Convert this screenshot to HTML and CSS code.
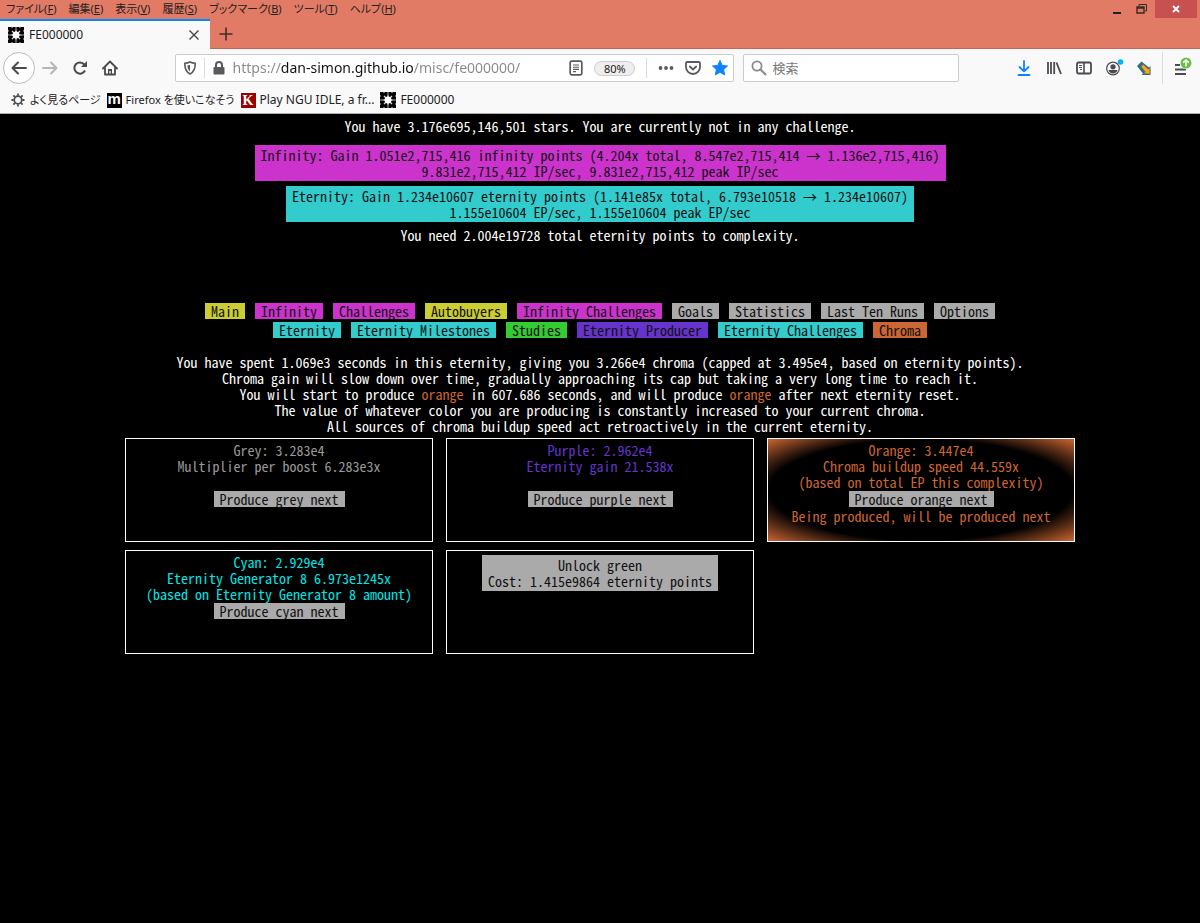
FILE: index.html
```html
<!DOCTYPE html>
<html lang="ja">
<head>
    <meta charset="UTF-8">
    <meta name="viewport" content="width=device-width, initial-scale=1.0">
    <title>FE000000</title>
    <link rel="stylesheet" href="styles.css">
</head>
<body>
    <svg class="defs" aria-hidden="true">
        <symbol id="star-icon" viewBox="0 0 16 16">
            <rect width="16" height="16" fill="#050505"/>
            <path d="M8 0v16M0 8h16" stroke="#aaa" stroke-width="1"/>
            <path d="M4 4l8 8M12 4l-8 8" stroke="#ddd" stroke-width="1.2"/>
            <circle cx="8" cy="8" r="3.4" fill="#fff"/>
            <path d="M8 2.500l1.500 5.500L8 13.500 6.500 8zM2.500 8L8 6.500 13.500 8 8 9.500z" fill="#fff"/>
            <path d="M.5 3v2M.5 11v2M15.5 3v2M15.5 11v2M3 .5h2M11 .5h2M3 15.5h2M11 15.5h2" stroke="#666"/>
        </symbol>
    </svg>

    <header class="browser">
        <div class="title-bar">
            <nav class="menu-bar">
                <a href="#file">ファイル(<u>F</u>)</a>
                <a href="#edit">編集(<u>E</u>)</a>
                <a href="#view">表示(<u>V</u>)</a>
                <a href="#history">履歴(<u>S</u>)</a>
                <a href="#bookmarks">ブックマーク(<u>B</u>)</a>
                <a href="#tools">ツール(<u>T</u>)</a>
                <a href="#help">ヘルプ(<u>H</u>)</a>
            </nav>
            <div class="window-buttons">
                <button aria-label="Minimize"><svg width="10" height="12" viewBox="0 0 10 12"><path d="M1 9h8v2H1z" fill="#222"/></svg></button>
                <button aria-label="Restore"><svg width="12" height="12" viewBox="0 0 12 12" fill="none" stroke="#3a2a26"><path d="M1 4h7v6H1zM1 5h7" stroke-width="1.4"/><path d="M3 3V1.5h7.500V8H9"/></svg></button>
                <button class="close" aria-label="Close"><svg width="10" height="10" viewBox="0 0 10 10"><path d="M2 2l6 6M8 2L2 8" stroke="#fff" stroke-width="1.8"/></svg></button>
            </div>
        </div>

        <div class="tab-strip">
            <div class="browser-tab">
                <svg width="16" height="16"><use href="#star-icon"/></svg>
                <span>FE000000</span>
                <button aria-label="Close tab"><svg width="12" height="12" viewBox="0 0 12 12"><path d="M1.500 1.500l9 9M10.500 1.500l-9 9" stroke="#444" stroke-width="1.400"/></svg></button>
            </div>
            <button class="new-tab" aria-label="New tab"><svg width="14" height="14" viewBox="0 0 14 14"><path d="M7 .5v13M.5 7h13" stroke="#4a2a22" stroke-width="1.600"/></svg></button>
        </div>

        <div class="toolbar">
            <button class="back" aria-label="Back"><svg width="16" height="16" viewBox="0 0 16 16" fill="none" stroke="#4a4a4f" stroke-width="2" stroke-linecap="round" stroke-linejoin="round"><path d="M7 2.500L1.500 8 7 13.500M2 8h13"/></svg></button>
            <button class="tool" aria-label="Forward"><svg width="16" height="16" viewBox="0 0 16 16" fill="none" stroke="#b5b5b6" stroke-width="2" stroke-linecap="round" stroke-linejoin="round"><path d="M9 2.500L14.500 8 9 13.500M14 8H1"/></svg></button>
            <button class="tool" aria-label="Reload"><svg width="16" height="16" viewBox="0 0 16 16"><path d="M13 10.500A5.600 5.600 0 1 1 12.300 4.500" fill="none" stroke="#4a4a4f" stroke-width="2"/><path d="M15 1v6H9z" fill="#4a4a4f"/></svg></button>
            <button class="tool" aria-label="Home"><svg width="16" height="16" viewBox="0 0 16 16"><path d="M1 8.500L8 1.500l7 7M3 8v6.500h10V8" fill="none" stroke="#4a4a4f" stroke-width="1.800" stroke-linejoin="round" stroke-linecap="round"/><path d="M6 14V9h4v5H8.700v-3H7.300v3z" fill="#4a4a4f"/></svg></button>
            <span class="spacer"></span>
            <div class="url-bar">
                <svg width="14" height="14" viewBox="0 0 14 14"><path d="M7 1C5 2 3.500 2.200 1.800 2.300 1.600 7.500 3 11 7 13c4-2 5.400-5.500 5.200-10.700C10.500 2.200 9 2 7 1z" fill="none" stroke="#5a5a5e" stroke-width="1.600"/><path d="M7 3.800c-1 .5-1.800.7-2.600.8C4.500 7.500 5.300 9.300 7 10.400z" fill="#5a5a5e"/></svg>
                <span class="divider"></span>
                <svg width="14" height="16" viewBox="0 0 14 16"><rect x="1.500" y="7" width="11" height="7.500" rx="1" fill="#5a5a5e"/><path d="M4 8V5a3 3 0 0 1 6 0v3" fill="none" stroke="#5a5a5e" stroke-width="2"/></svg>
                <input class="url" type="text" aria-label="Address" value="https://dan-simon.github.io/misc/fe000000/">
                <div class="url-actions">
                    <button aria-label="Reader view"><svg width="14" height="16" viewBox="0 0 14 16"><rect x="1.200" y="1.200" width="11.600" height="13.600" rx="1.500" fill="none" stroke="#5a5a5e" stroke-width="1.700"/><path d="M4 5h6M4 7.200h6M4 9.400h6M4 11.600h3" stroke="#5a5a5e" stroke-width="1.100"/></svg></button>
                    <button class="zoom-level">80%</button>
                    <span class="divider"></span>
                    <button aria-label="Page actions"><svg width="16" height="16" viewBox="0 0 16 16" fill="#5a5a5e"><circle cx="2.500" cy="8" r="1.900"/><circle cx="8" cy="8" r="1.900"/><circle cx="13.500" cy="8" r="1.900"/></svg></button>
                    <button aria-label="Save to Pocket"><svg width="16" height="16" viewBox="0 0 16 16" fill="none" stroke="#5a5a5e" stroke-width="1.800" stroke-linecap="round" stroke-linejoin="round"><path d="M2.200 2h11.600q1.200 0 1.200 1.200V7a7 7 0 0 1-14 0V3.200Q1 2 2.200 2z"/><path d="M4.800 6.500L8 9.500l3.200-3"/></svg></button>
                    <button aria-label="Bookmark"><svg width="16" height="16" viewBox="0 0 16 16"><path d="M8 .5l2.200 4.900 5.300.6-3.900 3.600 1.100 5.300L8 12.300l-4.700 2.600 1.100-5.300L.5 6l5.300-.6z" fill="#0a84ff" stroke="#0a84ff" stroke-linejoin="round"/></svg></button>
                </div>
            </div>
            <label class="search-bar">
                <svg width="16" height="16" viewBox="0 0 16 16"><circle cx="6" cy="6" r="4.600" fill="none" stroke="#8a8a8d" stroke-width="1.800"/><path d="M9.500 9.500l5 5" stroke="#8a8a8d" stroke-width="2" stroke-linecap="round"/></svg>
                <input type="text" placeholder="検索" aria-label="検索">
            </label>
            <span class="spacer"></span>
            <button class="tool" aria-label="Downloads"><svg width="16" height="16" viewBox="0 0 16 16" fill="none" stroke="#0a84ff" stroke-width="1.800" stroke-linecap="round" stroke-linejoin="round"><path d="M8 1v10M3.500 7L8 11.300 12.500 7M2.500 15h11"/></svg></button>
            <button class="tool" aria-label="Library"><svg width="16" height="16" viewBox="0 0 16 16" fill="none" stroke="#4a4a4f" stroke-width="1.800"><path d="M2 2v12M5 2v12M8.200 2v12M10.500 2.500L15 14"/></svg></button>
            <button class="tool" aria-label="Sidebars"><svg width="16" height="16" viewBox="0 0 16 16" fill="none" stroke="#4a4a4f"><rect x="1" y="2.500" width="14" height="11" rx="1.500" stroke-width="1.800"/><path d="M8 3v10" stroke-width="1.600"/><path d="M3 5.500h3M3 7.500h3M4 9.500h2"/></svg></button>
            <button class="tool" aria-label="Account"><svg width="20" height="18" viewBox="0 0 20 18"><circle cx="9" cy="9.500" r="6.300" fill="none" stroke="#4a4a4f" stroke-width="1.200"/><circle cx="9" cy="7.800" r="2.600" fill="#4a4a4f"/><path d="M4.500 11h9c-.5 2.300-2.300 3.500-4.500 3.500s-4-1.200-4.500-3.500z" fill="#4a4a4f"/><circle cx="16.500" cy="3" r="2.800" fill="#00b3f4"/></svg></button>
            <button class="tool" aria-label="Download helper"><svg width="16" height="16" viewBox="0 0 16 16"><path d="M1 6L5.500 1.500 13 7.500l1.500-1.500v9H5.500l1.500-1.500z" fill="#2f6d85"/><path d="M5 6.500l2.200-2 5 4.700 1.500-1.400.3 6.200-6.300-.6 1.600-1.500z" fill="#f5a623" stroke="#8a6a30" stroke-width=".6"/></svg></button>
            <span class="divider tall"></span>
            <button class="tool app-menu" aria-label="Open menu"><svg width="20" height="22" viewBox="0 0 20 22"><path d="M3 8h5M3 12.500h11M3 17h11" stroke="#4a4a4f" stroke-width="1.800"/><circle cx="14" cy="6" r="6" fill="#fff"/><circle cx="14" cy="6" r="5.500" fill="#6cbd45"/><path d="M14 9.500V3M11.200 5.600L14 3l2.800 2.600" fill="none" stroke="#fff" stroke-width="1.500"/></svg></button>
        </div>

        <nav class="bookmarks">
            <a href="#frequent" class="kana"><svg width="16" height="16" viewBox="0 0 16 16" fill="none" stroke="#4a4a4f"><circle cx="8" cy="8" r="3.800" stroke-width="1.800"/><path d="M8 1.500v2M8 12.500v2M1.500 8h2M12.500 8h2M3.400 3.400l1.400 1.400M11.200 11.200l1.400 1.400M12.600 3.400l-1.400 1.400M4.800 11.200l-1.400 1.400" stroke-width="1.800"/></svg>よく見るページ</a>
            <a href="#firefox" class="kana"><span class="badge moz">m</span>Firefox を使いこなそう</a>
            <a href="#ngu"><span class="badge kong">K</span>Play NGU IDLE, a fr...</a>
            <a href="#fe"><svg width="16" height="16"><use href="#star-icon"/></svg>FE000000</a>
        </nav>
    </header>

    <main lang="en">
        <section class="resets">
            <p>You have 3.176e695,146,501 stars. You are currently not in any challenge.</p>
            <button class="magenta">Infinity: Gain 1.051e2,715,416 infinity points (4.204x total, 8.547e2,715,414 → 1.136e2,715,416)<br>9.831e2,715,412 IP/sec, 9.831e2,715,412 peak IP/sec</button>
            <button class="cyan">Eternity: Gain 1.234e10607 eternity points (1.141e85x total, 6.793e10518 → 1.234e10607)<br>1.155e10604 EP/sec, 1.155e10604 peak EP/sec</button>
            <p>You need 2.004e19728 total eternity points to complexity.</p>
        </section>

        <nav class="game-tabs">
            <div>
                <button class="yellow">Main</button>
                <button class="magenta">Infinity</button>
                <button class="magenta">Challenges</button>
                <button class="yellow">Autobuyers</button>
                <button class="magenta">Infinity Challenges</button>
                <button>Goals</button>
                <button>Statistics</button>
                <button>Last Ten Runs</button>
                <button>Options</button>
            </div>
            <div>
                <button class="cyan">Eternity</button>
                <button class="cyan">Eternity Milestones</button>
                <button class="green">Studies</button>
                <button class="purple">Eternity Producer</button>
                <button class="cyan">Eternity Challenges</button>
                <button class="orange">Chroma</button>
            </div>
        </nav>

        <section class="chroma-info">
            <p>You have spent 1.069e3 seconds in this eternity, giving you 3.266e4 chroma (capped at 3.495e4, based on eternity points).</p>
            <p>Chroma gain will slow down over time, gradually approaching its cap but taking a very long time to reach it.</p>
            <p>You will start to produce <span class="orange-text">orange</span> in 607.686 seconds, and will produce <span class="orange-text">orange</span> after next eternity reset.</p>
            <p>The value of whatever color you are producing is constantly increased to your current chroma.</p>
            <p>All sources of chroma buildup speed act retroactively in the current eternity.</p>
        </section>

        <section class="colors">
            <div class="color-box grey-text">
                <p>Grey: 3.283e4</p>
                <p>Multiplier per boost 6.283e3x</p>
                <p>&nbsp;</p>
                <button>Produce grey next</button>
            </div>
            <div class="color-box purple-text">
                <p>Purple: 2.962e4</p>
                <p>Eternity gain 21.538x</p>
                <p>&nbsp;</p>
                <button>Produce purple next</button>
            </div>
            <div class="color-box orange-text producing">
                <p>Orange: 3.447e4</p>
                <p>Chroma buildup speed 44.559x</p>
                <p>(based on total EP this complexity)</p>
                <button>Produce orange next</button>
                <p>Being produced, will be produced next</p>
            </div>
            <div class="color-box cyan-text">
                <p>Cyan: 2.929e4</p>
                <p>Eternity Generator 8 6.973e1245x</p>
                <p>(based on Eternity Generator 8 amount)</p>
                <button>Produce cyan next</button>
            </div>
            <div class="color-box">
                <button class="unlock">Unlock green<br>Cost: 1.415e9864 eternity points</button>
            </div>
        </section>
    </main>
</body>
</html>
```
FILE: styles.css
```css
* {
    box-sizing: border-box;
}

body {
    margin: 0;
    background: #000;
    color: #fff;
}

p {
    margin: 0;
}

button {
    border: 0;
    padding: 0;
    background: none;
    font: inherit;
    color: inherit;
}

svg {
    display: block;
    flex: none;
}

.defs {
    position: absolute;
    width: 0;
    height: 0;
}

/* Browser window */
.browser {
    background: #f9f9fa;
    color: #222;
    font: 12px/16px "Noto Sans", "Noto Sans CJK JP", sans-serif;
    font-feature-settings: "palt";
    border-bottom: 1px solid #aaa;
}

.browser a {
    color: inherit;
    text-decoration: none;
    white-space: nowrap;
}

.title-bar {
    display: flex;
    justify-content: space-between;
    align-items: flex-start;
    height: 19px;
    background: #e27b65;
}

.menu-bar {
    display: flex;
    gap: 12px;
    padding: 1px 6px;
}

.browser .menu-bar a,
.browser .kana {
    font-size: 11px;
}

.window-buttons {
    display: flex;
    align-items: center;
    gap: 14px;
    padding-right: 3px;
}

.window-buttons .close {
    display: flex;
    align-items: center;
    justify-content: center;
    width: 42px;
    height: 18px;
    margin-left: -7px;
    background: #c75050;
}

.tab-strip {
    display: flex;
    height: 30px;
    background: #e27b65;
    border-bottom: 1px solid #c0675a;
}

.browser-tab {
    display: flex;
    align-items: center;
    gap: 5px;
    width: 210px;
    height: 30px;
    padding: 0 10px 0 8px;
    background: #f9f9fa;
    border-top: 2px solid #0a84ff;
}

.browser-tab button {
    margin-left: auto;
}

.new-tab {
    padding: 0 9px;
}

.toolbar {
    display: flex;
    align-items: center;
    height: 38px;
    padding: 0 3px;
}

.back {
    display: flex;
    align-items: center;
    justify-content: center;
    width: 32px;
    height: 32px;
    border: 1px solid #bbb;
    border-radius: 50%;
    background: #fff;
}

.tool {
    display: flex;
    align-items: center;
    justify-content: center;
    width: 30px;
    height: 30px;
}

.spacer {
    flex: 1;
}

.url-bar,
.search-bar {
    display: flex;
    align-items: center;
    height: 28px;
    background: #fff;
    border: 1px solid #ccc;
    border-radius: 2px;
}

.url-bar {
    flex: 11;
    gap: 7px;
    padding: 0 5px 0 7px;
}

.url-actions {
    display: flex;
    align-items: center;
    gap: 11px;
}

.search-bar {
    width: 216px;
    margin-left: 9px;
    padding: 0 7px;
    gap: 5px;
}

.browser input {
    flex: 1;
    min-width: 0;
    padding: 0;
    border: 0;
    outline: 0;
    background: none;
    font: 14px/20px "Noto Sans", "Noto Sans CJK JP", sans-serif;
}

.search-bar input {
    font-size: 13px;
}

.browser input::placeholder {
    color: #777;
}

/* The host name is darker than the rest of the address */
.browser .url {
    background: linear-gradient(to right, #888 48px, #111 48px, #111 180px, #888 180px);
    background-clip: text;
    -webkit-background-clip: text;
    color: transparent;
}

.divider {
    width: 1px;
    height: 20px;
    background: #ddd;
}

.divider.tall {
    height: 32px;
    margin: 0 4px 0 3px;
}

.zoom-level {
    width: 41px;
    height: 15px;
    border: 1px solid #ccc;
    border-radius: 8px;
    background: #eee;
    font-size: 11px;
    line-height: 13px;
}

.bookmarks {
    display: flex;
    gap: 6px;
    height: 26px;
    padding: 0 10px;
}

.bookmarks a {
    display: flex;
    align-items: center;
    gap: 4px;
}

.badge {
    width: 15px;
    height: 15px;
    background: #000;
    color: #fff;
    font: bold 15px/12px "Liberation Sans", sans-serif;
    text-align: center;
}

.kong {
    background: #900;
    font: bold 14px/15px "Liberation Serif", serif;
}

/* Game */
main {
    padding-top: 4px;
    font: 14px/16px "Noto Sans Mono CJK JP", "Liberation Mono", monospace;
    text-align: center;
}

main button {
    padding: 0 6px;
    background: #aaa;
    color: #111;
    line-height: 16px;
}

.resets {
    display: flex;
    flex-direction: column;
    align-items: center;
    gap: 5px;
    min-height: 185px;
}

.resets p:first-child {
    margin-bottom: 6px;
}

.resets button,
main .unlock {
    padding: 2px 6px;
}

.game-tabs {
    display: grid;
    gap: 3px;
    margin-bottom: 16px;
}

.game-tabs div {
    display: flex;
    justify-content: center;
    gap: 10px;
}

main .yellow {
    background: #cccc33;
}

main .magenta {
    background: #cc33cc;
}

main .cyan {
    background: #33cccc;
}

main .green {
    background: #33cc33;
}

main .purple {
    background: #6633cc;
}

main .orange {
    background: #cc6633;
}

.colors {
    display: grid;
    grid-template-columns: repeat(3, 1fr);
    gap: 8px 13px;
    width: 80%;
    margin: 4px auto 0;
    padding: 0 5px;
}

.color-box {
    min-height: 104px;
    padding: 3px;
    border: 1px solid #fff;
}

.color-box button {
    margin: 1px 0;
}

.grey-text {
    color: #999;
}

.purple-text {
    color: #6633cc;
}

.orange-text {
    color: #cc6633;
}

.cyan-text {
    color: #00e5e5;
}

.producing {
    background: radial-gradient(ellipse farthest-corner, #000 70%, #cc6633);
}
```
